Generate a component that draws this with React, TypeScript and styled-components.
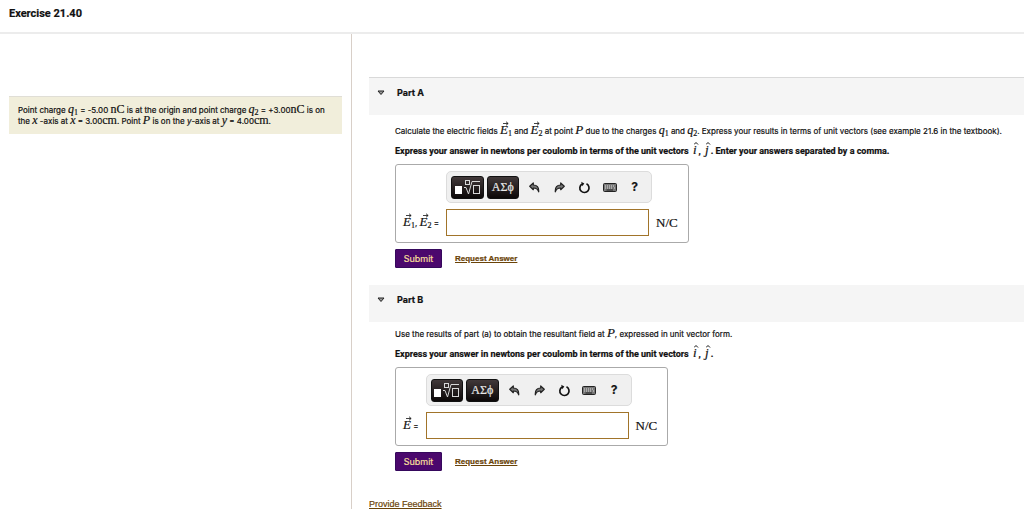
import React from 'react';
import styled, { createGlobalStyle } from 'styled-components';

const GlobalStyle = createGlobalStyle`
  * { box-sizing: border-box; }
  body {
    margin: 0;
    background: #fff;
    color: #111;
    font: 8px/12px Inter, "Liberation Sans", Arial, sans-serif;
    -webkit-text-stroke: 0.2px currentColor;
  }
  button, input { font: inherit; color: inherit; }
`;

const Page = styled.div`
  display: flex;
  flex-direction: column;
  min-height: 100vh;
`;

const TopBar = styled.header`
  height: 34px;
  padding: 8px 9px;
  border-bottom: 2px solid #ececec;
`;

const Title = styled.h1`
  margin: 0;
  font: 700 11px/12px Roboto, Arial, sans-serif;
`;

const Columns = styled.div`
  display: grid;
  grid-template-columns: 352px minmax(0, 1fr);
  flex: 1;
`;

const Sidebar = styled.aside`
  padding: 62px 9px 0;
  border-right: 1px solid #d8cfc8;
`;

const Problem = styled.p`
  margin: 0;
  padding: 8px 9px 7px;
  background: #f1eedb;
  border-top: 1px solid #e0ded6;
  line-height: 11px;
`;

const Main = styled.main`
  display: flex;
  flex-direction: column;
  padding: 43px 0 0 17px;
`;

const PartHeader = styled.div<{ $ruled?: boolean }>`
  display: flex;
  height: ${p => (p.$ruled ? 38 : 37)}px;
  padding: 9px 8px;
  background: #f5f5f5;
  border-top: ${p => (p.$ruled ? '1px solid #d9d9d9' : '0')};
`;

const Toggle = styled.button`
  display: flex;
  align-items: center;
  gap: 12px;
  height: 12px;
  padding: 0;
  border: 0;
  background: none;
  font-size: 9px;
  font-weight: 700;
`;

const PartBody = styled.div<{ $compact?: boolean }>`
  padding: ${p => (p.$compact ? 2 : 6)}px 8px 17px 26px;
`;

const Line = styled.p`
  margin: 0;
  height: 20px;
  line-height: 20px;
  white-space: nowrap;
`;

const Instruction = styled(Line)`
  font-family: Roboto, Arial, sans-serif;
  font-size: 9px;
  font-weight: 700;
`;

const Math = styled.span<{ $roman?: boolean; $large?: boolean }>`
  font-family: "Liberation Serif", "Times New Roman", serif;
  font-style: ${p => (p.$roman ? 'normal' : 'italic')};
  font-weight: 400;
  font-size: ${p => (p.$large ? 13 : 12)}px;
  line-height: 1px;
  white-space: nowrap;
`;

const Unit = styled.span`
  font: 13px/14px "Liberation Serif", "Times New Roman", serif;
`;

const Sub = styled.sub`
  font-size: 8px;
  font-style: normal;
  line-height: 1px;
  vertical-align: -2px;
`;

const Accented = styled.span<{ $spaced?: boolean }>`
  position: relative;
  display: inline-block;
  margin: 0 ${p => (p.$spaced ? 2 : 0)}px;
`;

const Accent = styled.svg`
  position: absolute;
  left: 1px;
  top: -8px;
  width: 8px;
  height: 5px;
  fill: none;
  stroke: currentColor;
`;

const AnswerBox = styled.div`
  display: inline-grid;
  grid-template-columns: auto 203px auto;
  column-gap: 7px;
  row-gap: 6px;
  align-items: center;
  height: 79px;
  margin-top: 3px;
  padding: 6px 10px 6px 7px;
  border: 1px solid #aaa;
  border-radius: 3px;
  vertical-align: top;
`;

const Toolbar = styled.div`
  grid-column: 2 / 4;
  justify-self: start;
  display: flex;
  align-items: center;
  width: 206px;
  height: 32px;
  padding: 0 4px;
  gap: 3px;
  background: #f0f0f0;
  border: 1px solid #dcdcdc;
  border-radius: 5px;
`;

const DarkButton = styled.button`
  display: grid;
  place-items: center;
  width: 33px;
  height: 23px;
  padding: 0;
  border: 1px solid #111;
  border-radius: 3px;
  background: linear-gradient(#413839, #0c0808);
  color: #e8e8e8;
  font: 12px/14px "Liberation Serif", serif;
`;

const Tools = styled.div`
  display: flex;
`;

const IconButton = styled.button`
  display: grid;
  place-items: center;
  width: 25px;
  height: 20px;
  padding: 0;
  border: 0;
  background: none;
  color: #161616;
  font-size: 12px;
  font-weight: 700;
`;

const Field = styled.input`
  width: 100%;
  height: 27px;
  padding: 4px;
  border: 1px solid #a1742a;
  background: #fff;
  font-size: 12px;
  outline: 0;
`;

const Label = styled.label`
  white-space: nowrap;
`;

const Actions = styled.div`
  display: flex;
  align-items: center;
  gap: 13px;
  margin-top: 6px;
`;

const Submit = styled.button`
  width: 47px;
  height: 19px;
  padding: 0;
  border: 1px solid #35085c;
  border-radius: 1px;
  background: #4b086d;
  color: #f7df9a;
  font-size: 9px;
`;

const Link = styled.a<{ $large?: boolean }>`
  color: #6a4308;
  font-family: "Liberation Sans", Arial, sans-serif;
  font-size: ${p => (p.$large ? 9 : 8)}px;
  font-weight: ${p => (p.$large ? 400 : 700)};
  text-decoration: underline;
`;

const Footer = styled.footer`
  line-height: 12px;
  margin-top: 10px;
`;

const Vec = ({ sub }: { sub?: string }) => (
  <Math $large>
    <Accented>
      E
      <Accent viewBox="0 0 8 5" aria-hidden="true"><path d="M2 2.5H7M5 .7L7.2 2.5L5 4.3" strokeWidth=".8" /></Accent>
    </Accented>
    {sub && <Sub>{sub}</Sub>}
  </Math>
);

const Hat = ({ children }: { children: string }) => (
  <Math $large>
    <Accented $spaced>
      {children}
      <Accent viewBox="0 0 8 5" aria-hidden="true"><path d="M0 3.5L2 1.5L4 3.5" /></Accent>
    </Accented>
  </Math>
);

const Q = ({ n }: { n: string }) => <Math>q<Sub>{n}</Sub></Math>;

const TemplateIcon = () => (
  <svg width="27" height="17" viewBox="0 0 27 17" fill="none" stroke="#d8d8d8">
    <rect x="1" y="7" width="7" height="8" fill="#fff" stroke="none" />
    <rect x="11.5" y="1.5" width="4" height="4" />
    <path d="M10 8.5H12L14.5 15L18 2.5H26" />
    <rect x="19.5" y="6.5" width="6" height="8" />
  </svg>
);

const UndoIcon = ({ flip }: { flip?: boolean }) => (
  <svg width="11" height="11" viewBox="0 0 11 11" stroke="#222">
    <path
      transform={flip ? 'matrix(-1 0 0 1 11 0)' : undefined}
      d="M.7 4.3L4.3 1V3C8 3 10 5 9.7 9.8C8.8 7 7.2 6 4.3 6V7.7Z"
      fill="#777"
      strokeWidth="1.2"
      strokeLinejoin="round"
    />
  </svg>
);

const ResetIcon = () => (
  <svg width="13" height="13" viewBox="0 0 13 13" fill="none" stroke="#111" strokeWidth="1.7">
    <path d="M8.5 2.8A4.6 4.6 0 1 1 4 3" />
    <path d="M3.2 .8L6.3 2.6L4.4 5.2Z" fill="#111" stroke="none" />
  </svg>
);

const KeyboardIcon = () => (
  <svg width="14" height="9" viewBox="0 0 14 9">
    <rect x=".5" y=".5" width="13" height="8" rx="1" fill="#777" stroke="#222" />
    <path d="M2 3H12M2 5H9.5M11 5H12" stroke="#ddd" strokeDasharray="1 1" />
    <path d="M3.5 7H10" stroke="#222" />
  </svg>
);

const Answer = ({ id, label }: { id: string; label: React.ReactNode }) => (
  <>
    <AnswerBox>
      <Toolbar role="toolbar" aria-label="Equation tools">
        <DarkButton type="button" aria-label="Templates"><TemplateIcon /></DarkButton>
        <DarkButton type="button" aria-label="Symbols">ΑΣϕ</DarkButton>
        <Tools>
          <IconButton type="button" aria-label="Undo"><UndoIcon /></IconButton>
          <IconButton type="button" aria-label="Redo"><UndoIcon flip /></IconButton>
          <IconButton type="button" aria-label="Reset"><ResetIcon /></IconButton>
          <IconButton type="button" aria-label="Keyboard shortcuts"><KeyboardIcon /></IconButton>
          <IconButton type="button" aria-label="Help">?</IconButton>
        </Tools>
      </Toolbar>
      <Label htmlFor={id}>{label} =</Label>
      <Field id={id} type="text" />
      <Unit>N/C</Unit>
    </AnswerBox>
    <Actions>
      <Submit type="button">Submit</Submit>
      <Link href="#answer">Request Answer</Link>
    </Actions>
  </>
);

const PartToggle = ({ children }: { children: string }) => (
  <Toggle type="button" aria-expanded="true">
    <svg width="8" height="6" viewBox="0 0 8 6" fill="#999" stroke="#222"><path d="M1 1H7L4 4.5Z" /></svg>
    {children}
  </Toggle>
);

export default function App() {
  return (
    <Page>
      <GlobalStyle />
      <TopBar><Title>Exercise 21.40</Title></TopBar>
      <Columns>
        <Sidebar>
          <Problem>
            Point charge <Q n="1" /> = -5.00 <Math $roman>nC</Math> is at the origin and point charge <Q n="2" /> = +3.00<Math $roman>nC</Math> is on
            the <Math>x</Math> -axis at <Math>x</Math> = 3.00<Math $roman>cm</Math>. Point <Math>P</Math> is on the <i>y</i>-axis at <Math>y</Math> = 4.00<Math $roman>cm</Math>.
          </Problem>
        </Sidebar>
        <Main>
          <section>
            <PartHeader $ruled><PartToggle>Part A</PartToggle></PartHeader>
            <PartBody>
              <Line>
                Calculate the electric fields <Vec sub="1" /> and <Vec sub="2" /> at point <Math $large>P</Math> due to the charges <Q n="1" /> and <Q n="2" />. Express your results in terms of unit vectors (see example 21.6 in the textbook).
              </Line>
              <Instruction>
                Express your answer in newtons per coulomb in terms of the unit vectors <Hat>i</Hat>, <Hat>j</Hat>. Enter your answers separated by a comma.
              </Instruction>
              <Answer id="fields" label={<><Vec sub="1" />, <Vec sub="2" /></>} />
            </PartBody>
          </section>
          <section>
            <PartHeader><PartToggle>Part B</PartToggle></PartHeader>
            <PartBody $compact>
              <Line>
                Use the results of part (a) to obtain the resultant field at <Math $large>P</Math>, expressed in unit vector form.
              </Line>
              <Instruction>
                Express your answer in newtons per coulomb in terms of the unit vectors <Hat>i</Hat>, <Hat>j</Hat>.
              </Instruction>
              <Answer id="resultant" label={<Vec />} />
            </PartBody>
          </section>
          <Footer><Link $large href="#feedback">Provide Feedback</Link></Footer>
        </Main>
      </Columns>
    </Page>
  );
}
